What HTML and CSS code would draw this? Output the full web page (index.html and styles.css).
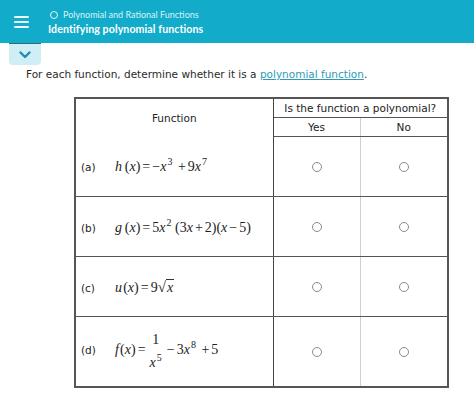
FILE: index.html
```html
<!DOCTYPE html>
<html>
<head>
<meta charset="utf-8">
<link rel="stylesheet" href="styles.css">
</head>
<body>
<header class="topbar">
  <div class="menu">
    <span></span><span></span><span></span>
  </div>
  <div class="titles">
    <div class="crumb"><span class="ring"></span>Polynomial and Rational Functions</div>
    <div class="title">Identifying polynomial functions</div>
  </div>
</header>
<div class="tab">
  <svg width="12" height="8" viewBox="0 0 12 8"><path d="M1.5 1.5 L6 6 L10.5 1.5" fill="none" stroke="#1f8fb0" stroke-width="2.4" stroke-linecap="round" stroke-linejoin="round"/></svg>
</div>
<p class="prompt">For each function, determine whether it is a <a class="link">polynomial function</a>.</p>
<table class="grid">
  <colgroup><col class="c1"><col class="c2"><col class="c3"></colgroup>
  <tr class="h1">
    <th rowspan="2" class="fn">Function</th>
    <th colspan="2" class="q">Is the function a polynomial?</th>
  </tr>
  <tr class="h2">
    <th class="yes">Yes</th>
    <th class="no">No</th>
  </tr>
  <tr class="ra">
    <td class="fcell"><span class="lbl">(a)</span><span class="m"><i>h</i>&#8201;(<i>x</i>)<span class="eq">=</span>&minus;<i>x</i><sup>3</sup> <span class="op">+</span>9<i>x</i><sup>7</sup></span></td>
    <td class="yes"><span class="radio"></span></td>
    <td class="no"><span class="radio"></span></td>
  </tr>
  <tr class="rb">
    <td class="fcell"><span class="lbl">(b)</span><span class="m"><i>g</i>&#8201;(<i>x</i>)<span class="eq">=</span>5<i>x</i><sup>2</sup> (3<i>x</i><span class="op">+</span>2)(<i>x</i><span class="op">&minus;</span>5)</span></td>
    <td class="yes"><span class="radio"></span></td>
    <td class="no"><span class="radio"></span></td>
  </tr>
  <tr class="rc">
    <td class="fcell"><span class="lbl">(c)</span><span class="m"><i>u</i>&#8202;(<i>x</i>)<span class="eq">=</span>9<span class="rad">&radic;</span><span class="under"><i>x</i></span></span></td>
    <td class="yes"><span class="radio"></span></td>
    <td class="no"><span class="radio"></span></td>
  </tr>
  <tr class="rd">
    <td class="fcell"><span class="lbl">(d)</span><span class="m"><i>f</i>&#8202;(<i>x</i>)<span class="eq">=</span><span class="frac"><span class="num">1</span><span class="den"><i>x</i><sup>5</sup></span></span><span class="op">&minus;</span>3<i>x</i><sup>8</sup> <span class="op">+</span>5</span></td>
    <td class="yes"><span class="radio"></span></td>
    <td class="no"><span class="radio"></span></td>
  </tr>
</table>
</body>
</html>
```
FILE: styles.css
```css
html, body {
  margin: 0;
  padding: 0;
  background: #ffffff;
}
body {
  font-family: "DejaVu Sans", Verdana, sans-serif;
  color: #222;
}
.topbar {
  height: 43px;
  background: #12abc9;
  display: flex;
  align-items: center;
}
.menu {
  width: 15px;
  margin-left: 14px;
  display: flex;
  flex-direction: column;
  gap: 3px;
}
.menu span {
  display: block;
  height: 2px;
  background: #eaf8fb;
  border-radius: 1px;
}
.titles {
  margin-left: 19px;
  display: flex;
  flex-direction: column;
  gap: 3px;
  margin-top: 1px;
}
.crumb {
  font-family: Lato, "Open Sans", sans-serif;
  font-size: 9px;
  color: #d9f3f8;
  display: flex;
  align-items: center;
  margin-left: 2px;
}
.ring {
  width: 6px;
  height: 6px;
  border: 1.2px solid #e8f8fb;
  border-radius: 50%;
  margin-right: 5px;
}
.title {
  font-family: Lato, "Open Sans", sans-serif;
  font-weight: 700;
  font-size: 10.6px;
  color: #ffffff;
  letter-spacing: 0.1px;
}
.tab {
  width: 32px;
  height: 21px;
  margin-left: 9px;
  background: #cfeef6;
  border-top: 1px solid #2f6b7a;
  border-radius: 0 0 4px 4px;
  display: flex;
  align-items: center;
  justify-content: center;
}
.prompt {
  margin: 1px 0 0 26px;
  font-size: 10.5px;
  line-height: 16px;
  color: #2a2a2a;
}
.link {
  color: #2d9bb6;
  text-decoration: underline;
}
.grid {
  margin: 15px 0 0 74px;
  width: 373px;
  border-collapse: collapse;
  table-layout: fixed;
  border: 2px solid #555;
}
.c1 { width: 198px; }
.c2 { width: 87px; }
.c3 { width: 88px; }
.grid th {
  font-weight: normal;
  font-size: 10.5px;
  color: #222;
  padding: 0;
  text-align: center;
}
.grid td {
  padding: 0;
  text-align: center;
}
.fn, .fcell {
  border-right: 1.5px solid #444;
}
.h1 { height: 19px; }
.h2 { height: 19px; }
.q { border-bottom: 1.5px solid #555; }
.h2 th { border-bottom: 1.5px solid #555; }
.yes { border-right: 1px solid #d0d0d0; }
.ra, .rb, .rc { height: 60px; }
.ra td, .rb td, .rc td { border-bottom: 1.5px solid #555; }
.rd { height: 71px; }
.fcell {
  text-align: left !important;
  white-space: nowrap;
}
.lbl {
  display: inline-block;
  font-size: 10.5px;
  margin-left: 5px;
  width: 34px;
  color: #222;
}
.m {
  font-family: "Liberation Serif", "DejaVu Serif", "Times New Roman", serif;
  font-size: 14px;
  color: #222;
}
.m i {
  font-family: "Liberation Serif", "DejaVu Serif", serif;
  font-style: italic;
}
.m sup {
  font-size: 10px;
  vertical-align: 6px;
  line-height: 0;
  margin-left: 1px;
}
.eq {
  margin: 0 2px 0 2px;
}
.op {
  margin: 0 2px;
}
.rad {
  font-size: 15px;
}
.under {
  border-top: 1px solid #333;
  padding: 0 1px;
}
.frac {
  display: inline-flex;
  flex-direction: column;
  align-items: center;
  vertical-align: 10px;
  margin: 0 3px 0 2px;
  line-height: 23px;
}
.radio {
  display: inline-block;
  width: 8px;
  height: 8px;
  border: 1px solid #8a8a8a;
  border-radius: 50%;
  background: #fff;
  vertical-align: middle;
}
```
